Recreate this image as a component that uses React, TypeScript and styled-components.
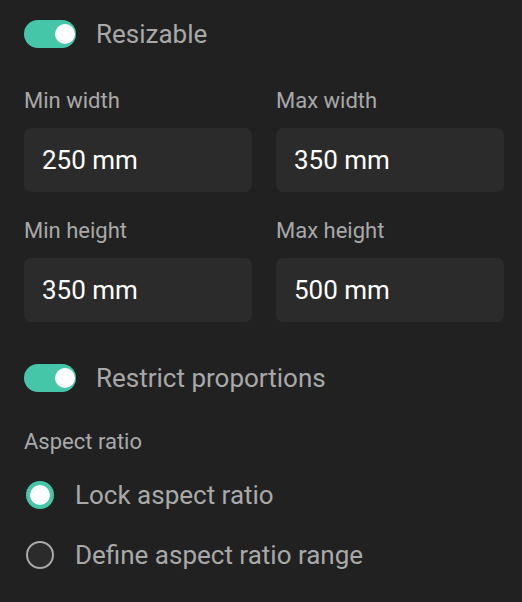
import styled, { createGlobalStyle } from 'styled-components'

const GlobalStyle = createGlobalStyle`
  html, body {
    margin: 0;
    padding: 0;
    background: #212121;
  }
  body {
    font-family: Roboto, "Noto Sans", "Liberation Sans", sans-serif;
  }
`

const Panel = styled.div`
  width: 522px;
  height: 602px;
  box-sizing: border-box;
  padding: 20px 18px 0 24px;
  background: #212121;
  display: flex;
  flex-direction: column;
`

const ToggleRow = styled.label<{ $gap: number }>`
  display: flex;
  align-items: center;
  gap: 20px;
  height: 28px;
  margin-bottom: ${({ $gap }) => $gap}px;
`

const Track = styled.span<{ $on: boolean }>`
  position: relative;
  width: 52px;
  height: 28px;
  border-radius: 14px;
  background: ${({ $on }) => ($on ? '#45c6a9' : '#555')};
  flex-shrink: 0;
`

const Knob = styled.span<{ $on: boolean }>`
  position: absolute;
  top: 4px;
  left: ${({ $on }) => ($on ? '31px' : '4px')};
  width: 20px;
  height: 20px;
  border-radius: 50%;
  background: #fff;
`

const ToggleText = styled.span`
  font-size: 26px;
  color: #a9a9a9;
  line-height: 28px;
`

const FieldGrid = styled.div`
  display: grid;
  grid-template-columns: 228px 228px;
  column-gap: 24px;
  row-gap: 26px;
  margin-bottom: 42px;
`

const Field = styled.div`
  display: flex;
  flex-direction: column;
`

const FieldLabel = styled.div`
  font-size: 22px;
  line-height: 26px;
  color: #a9a9a9;
  margin-bottom: 14px;
`

const InputBox = styled.div`
  height: 64px;
  box-sizing: border-box;
  padding: 0 18px;
  border-radius: 7px;
  background: #2b2b2b;
  display: flex;
  align-items: center;
  font-size: 26px;
  color: #fff;
`

const SectionLabel = styled.div`
  font-size: 22px;
  line-height: 26px;
  color: #a9a9a9;
  margin-top: 37px;
  margin-bottom: 26px;
`

const RadioRow = styled.label`
  display: flex;
  align-items: center;
  gap: 21px;
  height: 28px;
  margin-left: 2px;
  margin-bottom: 32px;
`

const RadioDot = styled.span<{ $checked: boolean }>`
  width: 28px;
  height: 28px;
  box-sizing: border-box;
  border-radius: 50%;
  flex-shrink: 0;
  border: ${({ $checked }) => ($checked ? '4px solid #45c6a9' : '2px solid #a9a9a9')};
  background: ${({ $checked }) => ($checked ? '#fff' : '#2b2b2b')};
`

const RadioText = styled.span`
  font-size: 26px;
  color: #a9a9a9;
`

const Toggle = ({ label, on, gap }: { label: string; on: boolean; gap: number }) => (
  <ToggleRow $gap={gap}>
    <Track $on={on}>
      <Knob $on={on} />
    </Track>
    <ToggleText>{label}</ToggleText>
  </ToggleRow>
)

const fields = [
  { label: 'Min width', value: '250 mm' },
  { label: 'Max width', value: '350 mm' },
  { label: 'Min height', value: '350 mm' },
  { label: 'Max height', value: '500 mm' },
]

export default function App() {
  return (
    <>
      <GlobalStyle />
      <Panel>
        <Toggle label="Resizable" on gap={40} />
        <FieldGrid>
          {fields.map((f) => (
            <Field key={f.label}>
              <FieldLabel>{f.label}</FieldLabel>
              <InputBox>{f.value}</InputBox>
            </Field>
          ))}
        </FieldGrid>
        <Toggle label="Restrict proportions" on gap={0} />
        <SectionLabel>Aspect ratio</SectionLabel>
        <RadioRow>
          <RadioDot $checked />
          <RadioText>Lock aspect ratio</RadioText>
        </RadioRow>
        <RadioRow>
          <RadioDot $checked={false} />
          <RadioText>Define aspect ratio range</RadioText>
        </RadioRow>
      </Panel>
    </>
  )
}
